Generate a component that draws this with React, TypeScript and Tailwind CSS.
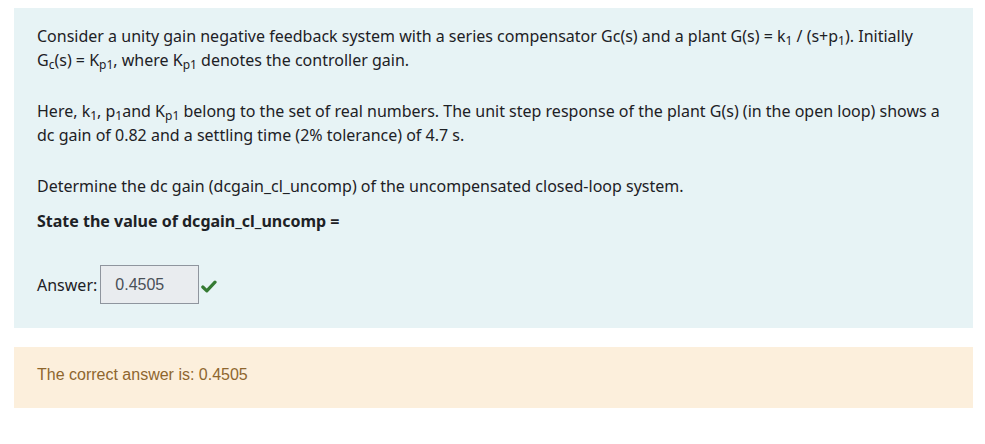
import React from "react";

const Sub = ({ children }: { children: React.ReactNode }) => (
  <sub className="text-[12px]">{children}</sub>
);

export default function App() {
  return (
    <div className="w-[985px] h-[444px] bg-white pt-2 px-[14px] text-[#1d2125]" style={{ fontFamily: '"Noto Sans", "Open Sans", sans-serif' }}>
      <div className="w-[959px] bg-[#e7f3f5] pt-4 pb-6 pl-[23px] pr-4 text-[16px] leading-6">
        <p>
          Consider a unity gain negative feedback system with a series compensator Gc(s) and a plant G(s) = k<Sub>1</Sub> / (s+p<Sub>1</Sub>). Initially
          <br />
          G<Sub>c</Sub>(s) = K<Sub>p1</Sub>, where K<Sub>p1</Sub> denotes the controller gain.
        </p>
        <p className="mt-[27px]">
          Here, k<Sub>1</Sub>, p<Sub>1</Sub>and K<Sub>p1</Sub> belong to the set of real numbers. The unit step response of the plant G(s) (in the open loop) shows a dc gain of 0.82 and a settling time (2% tolerance) of 4.7 s.
        </p>
        <p className="mt-[27px]">Determine the dc gain (dcgain_cl_uncomp) of the uncompensated closed-loop system.</p>
        <p className="mt-[11px] font-bold">State the value of dcgain_cl_uncomp =</p>
        <div className="mt-8 flex items-center">
          <span className="mr-[3px]">Answer:</span>
          <div className="w-[99px] h-[39px] border border-[#8f959e] bg-[#e9ecef] text-[#495057] text-[16px] flex items-center pl-[14px]" style={{ fontFamily: '"Liberation Sans", Arial, sans-serif' }}>
            0.4505
          </div>
          <svg className="ml-[2px] mt-[3px]" width="16" height="13" viewBox="0 0 16 13">
            <path d="M1.8 7 L5.8 10.8 L14 2.2" fill="none" stroke="#357a32" strokeWidth="3.2" strokeLinecap="round" strokeLinejoin="round" />
          </svg>
        </div>
      </div>
      <div className="w-[959px] h-[61px] mt-[19px] bg-[#fcefdc] pl-[23px] pt-4 leading-6 text-[16px] text-[#8e662e]" style={{ fontFamily: '"Liberation Sans", Arial, sans-serif' }}>
        The correct answer is: 0.4505
      </div>
    </div>
  );
}
